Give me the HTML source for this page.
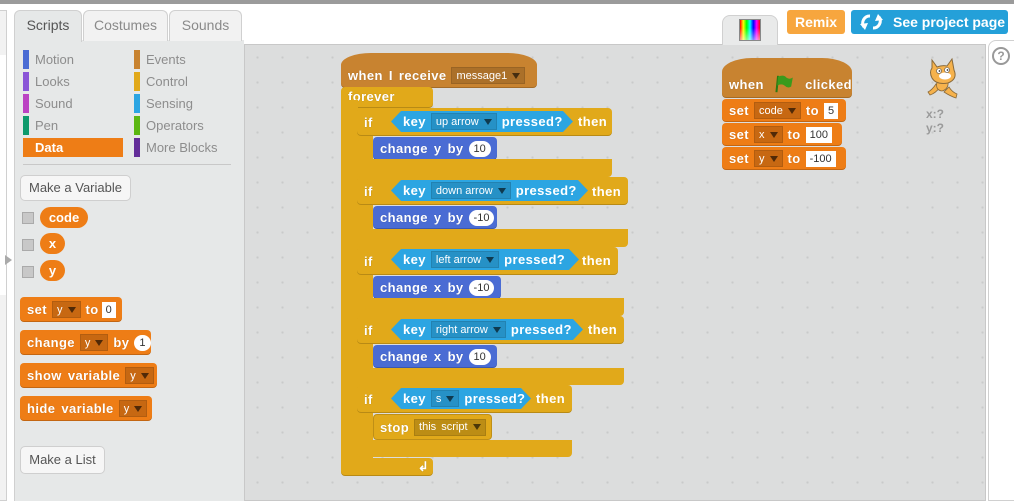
<!DOCTYPE html>
<html><head><meta charset="utf-8"><style>
*{margin:0;padding:0;box-sizing:border-box}
body{width:1014px;height:501px;overflow:hidden;background:#fff;position:relative;font-family:"Liberation Sans",sans-serif}
.a{position:absolute}
.tab{position:absolute;top:10px;height:31px;border:1px solid #d0d0d0;border-bottom:none;border-radius:6px 6px 0 0;background:#f2f2f2;color:#8a8a8a;font-size:14px;text-align:center;line-height:29px}
.cat{position:absolute;font-size:13px;color:#8d8d8d;height:19px;line-height:19px;padding-left:12px}
.cat i{position:absolute;left:0;top:0;width:6px;height:19px}
.b{position:absolute;color:#fff;font-weight:bold;font-size:13px;letter-spacing:.4px;word-spacing:2px;display:flex;align-items:center;padding-left:7px;border-radius:4px;white-space:pre;text-shadow:0 0 1px rgba(0,0,0,.25);box-shadow:inset 0 -1px 0 rgba(0,0,0,.18)}
.o{background:#ee7d16}.c{background:#e1a91a}.m{background:#4a6cd4}.e{background:#c88330}
.dd{display:inline-flex;align-items:center;height:17px;font-weight:normal;font-size:11px;letter-spacing:0;padding:0 4px;margin:0 5px;background:rgba(0,0,0,.16);border:1px solid rgba(0,0,0,.1);text-shadow:none}
.dd:after{content:"";display:inline-block;margin-left:5px;border-top:6px solid rgba(0,0,0,.6);border-left:4px solid transparent;border-right:4px solid transparent}
.num{display:inline-flex;align-items:center;height:16px;background:#fff;color:#333;font-weight:normal;font-size:11px;letter-spacing:0;padding:0 5px;border-radius:9px;margin-left:5px;text-shadow:none}
.box{display:inline-flex;align-items:center;height:16px;background:#fff;color:#333;font-weight:normal;font-size:11px;letter-spacing:0;padding:0 4px;margin-left:5px;text-shadow:none}
.hx{position:absolute;background:#2ca5e2;color:#fff;font-weight:bold;font-size:13px;letter-spacing:.4px;display:flex;align-items:center;padding-left:12px;height:21px;clip-path:polygon(10px 0,calc(100% - 10px) 0,100% 50%,calc(100% - 10px) 100%,10px 100%,0 50%);white-space:pre}
.hx .dd{background:rgba(0,0,0,.12)}
.th{position:absolute;color:#fff;font-weight:bold;font-size:13px;letter-spacing:.4px}
.btn{position:absolute;background:#f6f6f6;border:1px solid #cfcfcf;border-radius:5px;color:#555;font-size:13px;text-align:center}
.chk{position:absolute;left:22px;width:12px;height:12px;background:#c8c8c8;border:1px solid #aaa}
.rep{position:absolute;left:40px;height:21px;border-radius:11px;background:#ee7d16;color:#fff;font-weight:bold;font-size:13px;text-align:center;line-height:21px}
</style></head><body>
<div class="a" style="left:0;top:0;width:1014px;height:4px;background:#9b9b9b"></div>
<div class="a" style="left:0;top:10px;width:7px;height:491px;border:1px solid #d0d0d0;border-left:none;background:#f2f2f2"></div>
<div class="a" style="left:0;top:55px;width:6px;height:240px;background:#fff"></div>
<div class="a" style="left:5px;top:255px;width:0;height:0;border-left:7px solid #aaa;border-top:5px solid transparent;border-bottom:5px solid transparent"></div>
<div class="a" style="left:14px;top:40px;width:230px;height:461px;background:#e6e8e8;border-left:1px solid #d0d0d0"></div>
<div class="tab" style="left:14px;width:68px;background:#e6e8e8;color:#555;height:32px">Scripts</div>
<div class="tab" style="left:83px;width:85px">Costumes</div>
<div class="tab" style="left:169px;width:73px">Sounds</div>
<div class="cat" style="left:23px;top:50px"><i style="background:#4a6cd4"></i>Motion</div>
<div class="cat" style="left:23px;top:72px"><i style="background:#8a55d7"></i>Looks</div>
<div class="cat" style="left:23px;top:94px"><i style="background:#bb42c3"></i>Sound</div>
<div class="cat" style="left:23px;top:116px"><i style="background:#0e9a6c"></i>Pen</div>
<div class="a" style="left:23px;top:138px;width:100px;height:19px;background:#ee7d16;color:#fff;font-weight:bold;font-size:13px;line-height:19px;padding-left:12px">Data</div>
<div class="cat" style="left:134px;top:50px"><i style="background:#c88330"></i>Events</div>
<div class="cat" style="left:134px;top:72px"><i style="background:#e1a91a"></i>Control</div>
<div class="cat" style="left:134px;top:94px"><i style="background:#2ca5e2"></i>Sensing</div>
<div class="cat" style="left:134px;top:116px"><i style="background:#5cb712"></i>Operators</div>
<div class="cat" style="left:134px;top:138px"><i style="background:#632d99"></i>More Blocks</div>
<div class="a" style="left:23px;top:164px;width:208px;height:1px;background:#c8c8c8"></div>
<div class="btn" style="left:20px;top:175px;width:111px;height:26px;line-height:24px">Make a Variable</div>
<div class="chk" style="top:212px"></div><div class="rep" style="top:207px;width:48px">code</div>
<div class="chk" style="top:239px"></div><div class="rep" style="top:233px;width:25px">x</div>
<div class="chk" style="top:266px"></div><div class="rep" style="top:260px;width:25px">y</div>
<div class="b o" style="left:20px;top:297px;width:102px;height:25px">set<span class="dd">y</span>to<span class="box" style="margin-left:3px">0</span></div>
<div class="b o" style="left:20px;top:330px;width:131px;height:25px">change<span class="dd">y</span>by<span class="num">1</span></div>
<div class="b o" style="left:20px;top:363px;width:137px;height:25px">show variable<span class="dd">y</span></div>
<div class="b o" style="left:20px;top:396px;width:132px;height:25px">hide variable<span class="dd">y</span></div>
<div class="btn" style="left:20px;top:446px;width:85px;height:28px;line-height:26px">Make a List</div>
<div class="a" style="left:244px;top:44px;width:742px;height:457px;background-color:#dcdddd;border:1px solid #c8c8c8;background-image:radial-gradient(circle,#c9caca 1px,transparent 1.3px);background-size:25px 25px"></div>
<div class="a" style="left:722px;top:15px;width:56px;height:30px;background:#e9eaea;border:1px solid #d0d0d0;border-bottom:none;border-radius:8px 8px 0 0"></div>
<div class="a" style="left:739px;top:19px;width:22px;height:22px;border:1px solid #888;background:linear-gradient(#0000 0,#fff0 40%,#fff8 100%),linear-gradient(90deg,#f00,#ff0,#0f0,#0ff,#00f,#f0f,#f00)"></div>
<div class="a" style="left:787px;top:10px;width:58px;height:24px;background:#f7a63e;border-radius:3px;color:#fff;font-weight:bold;font-size:14px;text-align:center;line-height:24px">Remix</div>
<div class="a" style="left:851px;top:10px;width:157px;height:24px;background:#24a0d9;border-radius:3px;color:#fff;font-weight:bold;font-size:14px;line-height:24px;padding-left:42px">See project page</div>
<svg class="a" style="left:858px;top:12px" width="28" height="20" viewBox="0 0 28 20"><path d="M12 4 A7 7 0 0 0 6 15" fill="none" stroke="#fff" stroke-width="3"/><path d="M2 12 L7 18 L10 11 Z" fill="#fff"/><path d="M15 16 A7 7 0 0 0 21 5" fill="none" stroke="#fff" stroke-width="3"/><path d="M25 8 L20 2 L17 9 Z" fill="#fff"/></svg>
<div class="a" style="left:988px;top:40px;width:30px;height:461px;background:#fff;border:1px solid #d0d0d0;border-radius:8px 0 0 0"></div>
<div class="a" style="left:992px;top:47px;width:18px;height:18px;border:2px solid #999;border-radius:50%;color:#999;font-size:12px;font-weight:bold;text-align:center;line-height:14px">?</div>
<svg class="a" style="left:922px;top:56px" width="40" height="46" viewBox="0 0 40 46">
<path d="M22 36 Q28 40 34 42 L35 38 Q30 36 27 31 Z" fill="#f6b24c" stroke="#8a6a3a" stroke-width=".8"/>
<path d="M14 28 Q10 34 6 36 L8 39 Q14 37 18 31 Z" fill="#f6b24c" stroke="#8a6a3a" stroke-width=".8"/>
<path d="M15 26 Q13 34 20 35 Q27 33 26 25 Z" fill="#f6b24c" stroke="#8a6a3a" stroke-width=".8"/>
<path d="M10 4 L15 11 Q20 9 25 10 L30 3 L32 14 Q36 23 26 27 Q14 29 10 22 Q7 16 10 12 Z" fill="#f6b24c" stroke="#8a6a3a" stroke-width="1"/>
<ellipse cx="23" cy="20" rx="6" ry="3.5" fill="#fff"/><circle cx="17" cy="15" r="2.5" fill="#fff" stroke="#555" stroke-width=".6"/><circle cx="25" cy="14" r="2.5" fill="#fff" stroke="#555" stroke-width=".6"/><circle cx="17.5" cy="15" r=".9" fill="#333"/><circle cx="25.5" cy="14" r=".9" fill="#333"/></svg>
<div class="a" style="left:926px;top:107px;color:#9a9a9a;font-size:12px;font-weight:bold;line-height:14px">x:?<br>y:?</div>
<div class="b e" style="left:722px;top:58px;width:130px;height:40px;border-radius:30px 30px 4px 4px/14px 14px 4px 4px;padding-top:12px">when <svg width="26" height="24" viewBox="0 0 26 24" style="margin:0 4px"><path d="M5 2 L3 22" stroke="#2b7a12" stroke-width="2.5"/><path d="M5 3 Q12 0 15 4 Q19 7 23 4 L21 15 Q17 18 13 14 Q9 11 4 14 Z" fill="#3a9a1c"/></svg> clicked</div>
<div class="b o" style="left:722px;top:99px;width:124px;height:23px">set<span class="dd">code</span>to<span class="box">5</span></div>
<div class="b o" style="left:722px;top:123px;width:120px;height:23px">set<span class="dd">x</span>to<span class="box">100</span></div>
<div class="b o" style="left:722px;top:147px;width:124px;height:23px">set<span class="dd">y</span>to<span class="box">-100</span></div>
<div class="b e" style="left:341px;top:53px;width:196px;height:35px;border-radius:30px 30px 4px 4px/12px 12px 4px 4px;padding-top:10px">when I receive<span class="dd" style="background:rgba(0,0,0,.14)">message1</span></div>
<div class="b c" style="left:341px;top:87px;width:92px;height:21px;align-items:flex-start;padding-top:2px">forever</div>
<div class="a c" style="left:341px;top:100px;width:17px;height:375px;border-radius:0 0 0 4px"></div>
<div class="b c" style="left:341px;top:458px;width:92px;height:18px;justify-content:flex-end;padding-right:4px">↲</div>
<div class="a c" style="left:357px;top:108px;width:16px;height:350px"></div>
<div class="b c" style="left:357px;top:108px;width:255px;height:28px">if</div>
<div class="hx" style="left:391px;top:111px;width:182px">key<span class="dd">up arrow</span>pressed?</div>
<div class="th" style="left:578px;top:114px">then</div>
<div class="b m" style="left:373px;top:137px;width:124px;height:23px">change y by<span class="num">10</span></div>
<div class="a c" style="left:357px;top:159px;width:255px;height:18px;border-radius:0 0 4px 4px"></div>
<div class="b c" style="left:357px;top:177px;width:271px;height:28px">if</div>
<div class="hx" style="left:391px;top:180px;width:197px">key<span class="dd">down arrow</span>pressed?</div>
<div class="th" style="left:592px;top:184px">then</div>
<div class="b m" style="left:373px;top:206px;width:124px;height:23px">change y by<span class="num">-10</span></div>
<div class="a c" style="left:357px;top:229px;width:271px;height:18px;border-radius:0 0 4px 4px"></div>
<div class="b c" style="left:357px;top:247px;width:261px;height:28px">if</div>
<div class="hx" style="left:391px;top:249px;width:188px">key<span class="dd">left arrow</span>pressed?</div>
<div class="th" style="left:582px;top:253px">then</div>
<div class="b m" style="left:373px;top:276px;width:128px;height:23px">change x by<span class="num">-10</span></div>
<div class="a c" style="left:357px;top:298px;width:267px;height:18px;border-radius:0 0 4px 4px"></div>
<div class="b c" style="left:357px;top:316px;width:267px;height:28px">if</div>
<div class="hx" style="left:391px;top:319px;width:192px">key<span class="dd">right arrow</span>pressed?</div>
<div class="th" style="left:588px;top:322px">then</div>
<div class="b m" style="left:373px;top:345px;width:124px;height:23px">change x by<span class="num">10</span></div>
<div class="a c" style="left:357px;top:368px;width:267px;height:17px;border-radius:0 0 4px 4px"></div>
<div class="b c" style="left:357px;top:385px;width:215px;height:28px">if</div>
<div class="hx" style="left:391px;top:388px;width:140px">key<span class="dd">s</span>pressed?</div>
<div class="th" style="left:536px;top:391px">then</div>
<div class="b c" style="left:373px;top:414px;width:119px;height:26px;box-shadow:inset 0 0 0 1px rgba(0,0,0,.15)">stop<span class="dd">this script</span></div>
<div class="a c" style="left:357px;top:440px;width:215px;height:17px;border-radius:0 0 4px 4px"></div>
</body></html>
